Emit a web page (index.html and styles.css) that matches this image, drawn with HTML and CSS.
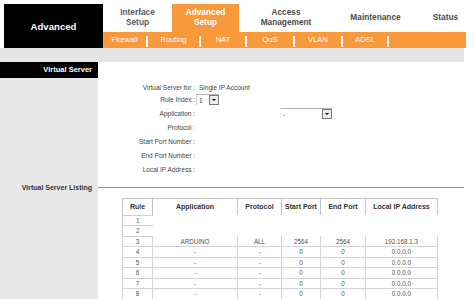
FILE: index.html
```html
<!DOCTYPE html>
<html lang="en">
<head>
  <meta charset="UTF-8" />
  <title>Advanced Setup - Virtual Server</title>
  <link rel="stylesheet" href="styles.css">
</head>
<body>
  <div class="top">
    <div class="brand">Advanced</div>
    <div class="menu">
      <div class="tabs">
        <div class="tab t-iface">Interface<br>Setup</div>
        <div class="tab t-adv active">Advanced<br>Setup</div>
        <div class="tab t-access">Access<br>Management</div>
        <div class="tab t-maint">Maintenance</div>
        <div class="tab t-status">Status</div>
      </div>
      <div class="subnav">
        <span class="sub s-fw">Firewall</span><i class="sep"></i>
        <span class="sub s-rt">Routing</span><i class="sep"></i>
        <span class="sub s-nat">NAT</span><i class="sep"></i>
        <span class="sub s-qos">QoS</span><i class="sep"></i>
        <span class="sub s-vlan">VLAN</span><i class="sep"></i>
        <span class="sub s-adsl">ADSL</span><i class="sep"></i>
      </div>
    </div>
  </div>

  <div class="strip"></div>

  <div class="content">
    <div class="side title">Virtual Server</div>
    <div class="main"></div>

    <div class="side"></div>
    <div class="main form">
      <div class="frow first"><span class="lbl">Virtual Server for :</span><span class="val">Single IP Account</span></div>
      <div class="frow"><span class="lbl">Rule Index :</span>
        <span class="select small"><span class="sel-text">1</span><span class="arrow"></span></span>
      </div>
      <div class="frow"><span class="lbl">Application :</span>
        <span class="select app"><span class="sel-text">-</span><span class="arrow"></span></span>
      </div>
      <div class="frow"><span class="lbl">Protocol :</span></div>
      <div class="frow"><span class="lbl">Start Port Number :</span></div>
      <div class="frow"><span class="lbl">End Port Number :</span></div>
      <div class="frow"><span class="lbl">Local IP Address :</span></div>
    </div>

    <div class="side listing">Virtual Server Listing</div>
    <div class="main divider"><div class="line"></div></div>

    <div class="side"></div>
    <div class="main">
      <table class="listing-table">
        <colgroup>
          <col class="c-rule"><col class="c-app"><col class="c-proto"><col class="c-start"><col class="c-end"><col class="c-ip">
        </colgroup>
        <tr>
          <th class="rule">Rule</th><th>Application</th><th>Protocol</th><th>Start Port</th><th>End Port</th><th>Local IP Address</th>
        </tr>
        <tr class="blank"><td class="rule">1</td><td></td><td></td><td></td><td></td><td></td></tr>
        <tr class="blank"><td class="rule">2</td><td></td><td></td><td></td><td></td><td></td></tr>
        <tr><td>3</td><td>ARDUINO</td><td>ALL</td><td>2564</td><td>2564</td><td>192.168.1.3</td></tr>
        <tr><td>4</td><td>-</td><td>-</td><td>0</td><td>0</td><td>0.0.0.0</td></tr>
        <tr><td>5</td><td>-</td><td>-</td><td>0</td><td>0</td><td>0.0.0.0</td></tr>
        <tr><td>6</td><td>-</td><td>-</td><td>0</td><td>0</td><td>0.0.0.0</td></tr>
        <tr><td>7</td><td>-</td><td>-</td><td>0</td><td>0</td><td>0.0.0.0</td></tr>
        <tr><td>8</td><td>-</td><td>-</td><td>0</td><td>0</td><td>0.0.0.0</td></tr>
        <tr><td>9</td><td>-</td><td>-</td><td>0</td><td>0</td><td>0.0.0.0</td></tr>
      </table>
    </div>
  </div>
</body>
</html>
```

FILE: styles.css
```css
body {
  margin: 0;
  background-color: #fff;
  font-family: "Liberation Sans", Arial, sans-serif;
  color: #444;
}

.top {
  display: flex;
  padding: 4px 0 0 4px;
}

.brand {
  width: 99px;
  height: 44px;
  background-color: #000;
  color: #fff;
  font-weight: bold;
  font-size: 9.6px;
  display: flex;
  align-items: center;
  justify-content: center;
}

.menu {
  display: flex;
  flex-direction: column;
}

.tabs {
  display: flex;
  height: 28px;
}

.tab {
  display: flex;
  align-items: center;
  justify-content: center;
  text-align: center;
  font-weight: bold;
  font-size: 8.3px;
  line-height: 9.6px;
  color: #4a4a4a;
}

.t-iface { width: 69px; color: #5a5a5a; }
.t-adv { width: 67px; }
.t-access { width: 94px; }
.t-maint { width: 85px; }
.t-status { width: 55px; }

.tab.active {
  background-color: #f89a3c;
  color: #fff;
}

.subnav {
  display: flex;
  width: 363px;
  height: 16px;
  background-color: #f89a3c;
}

.sub {
  color: #fff;
  font-size: 7.6px;
  line-height: 16px;
  text-align: center;
}

.s-fw { width: 43px; }
.s-rt { width: 51px; }
.s-nat { width: 44px; }
.s-qos { width: 46px; }
.s-vlan { width: 46px; }
.s-adsl { width: 44px; }

.sep {
  width: 2px;
  height: 11px;
  margin-top: 4px;
  background-color: #fff;
}

.strip {
  width: 464px;
  height: 14px;
  background-color: #e6e6e6;
}

.content {
  display: grid;
  grid-template-columns: 98px 366px;
}

.side {
  background-color: #e8e8e8;
}

.side.title {
  height: 16px;
  background-color: #000;
  color: #fff;
  font-weight: bold;
  font-size: 7.5px;
  line-height: 16px;
  text-align: right;
  padding-right: 6px;
}

.form {
  padding-top: 3.5px;
  font-size: 6.5px;
  color: #444;
}

.frow {
  display: flex;
  align-items: center;
  height: 14px;
}

.frow.first {
  height: 11px;
}

.lbl {
  width: 97px;
  text-align: right;
  white-space: nowrap;
}

.val {
  margin-left: 4px;
}

.select {
  display: flex;
  align-items: center;
  height: 10px;
  border-top: 1px solid #b5b5b5;
  border-left: 1px solid #d0d0d0;
  font-size: 6.5px;
  color: #333;
}

.select.small {
  width: 22px;
  margin-left: 1px;
}

.select.app {
  width: 51px;
  margin-left: 85px;
  border-left-color: #eee;
}

.sel-text {
  flex: 1;
  padding-left: 2px;
}

.arrow {
  width: 8px;
  height: 8px;
  border: 1px solid #7a7a7a;
  background-color: #ececec;
  position: relative;
}

.arrow::after {
  content: "";
  position: absolute;
  left: 2px;
  top: 3px;
  border-left: 2px solid transparent;
  border-right: 2px solid transparent;
  border-top: 2px solid #000;
}

.side.listing {
  height: 21px;
  font-weight: bold;
  font-size: 7px;
  line-height: 21px;
  color: #333;
  text-align: right;
  padding-right: 6px;
  white-space: nowrap;
}

.divider {
  display: flex;
  align-items: center;
}

.line {
  width: 100%;
  height: 1px;
  background-color: #8f8f8f;
}

.listing-table {
  border-collapse: collapse;
  table-layout: fixed;
  width: 315px;
  margin-left: 24px;
  font-size: 6.3px;
  color: #555;
}

.c-rule { width: 30px; }
.c-app { width: 85px; }
.c-proto { width: 44px; }
.c-start { width: 39px; }
.c-end { width: 45px; }
.c-ip { width: 72px; }

.listing-table th {
  height: 16px;
  padding: 0;
  font-size: 7px;
  font-weight: bold;
  color: #333;
  border: 1px solid #c4c4c4;
  border-bottom: none;
}

.listing-table th.rule {
  border-bottom: 1px solid #d0d0d0;
}

.listing-table td {
  height: 9.5px;
  padding: 0;
  text-align: center;
  line-height: 9px;
  border-left: 1px solid #d4d4d4;
  border-right: 1px solid #d4d4d4;
  border-bottom: 1px solid #d4d4d4;
}

.listing-table tr.blank td {
  border: none;
}

.listing-table tr.blank td.rule {
  border-left: 1px solid #c4c4c4;
  border-bottom: 1px solid #d0d0d0;
}
```
